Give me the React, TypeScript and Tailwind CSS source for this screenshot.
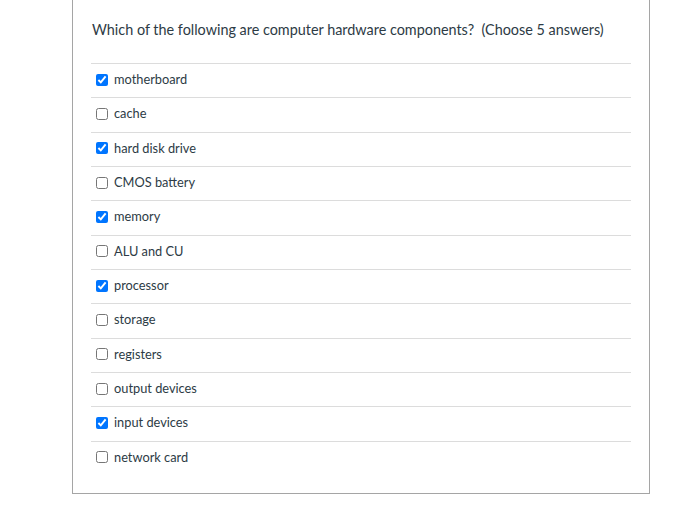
const options: { label: string; checked: boolean }[] = [
  { label: "motherboard", checked: true },
  { label: "cache", checked: false },
  { label: "hard disk drive", checked: true },
  { label: "CMOS battery", checked: false },
  { label: "memory", checked: true },
  { label: "ALU and CU", checked: false },
  { label: "processor", checked: true },
  { label: "storage", checked: false },
  { label: "registers", checked: false },
  { label: "output devices", checked: false },
  { label: "input devices", checked: true },
  { label: "network card", checked: false },
]

export default function App() {
  return (
    <div className="h-[513px] w-[682px] bg-white pl-[72px] font-['Lato','Liberation_Sans',sans-serif] text-[#2d3b45]">
      {/* card, top edge sits above the viewport */}
      <div className="w-[578px] border-x border-b border-[#a5a5a5] px-[18px] pb-[18px]">
        <div className="flex h-[63px] items-start pt-[19px] pl-px text-[14.4px]">
          Which of the following are computer hardware components?&nbsp; (Choose 5 answers)
        </div>

        <ul>
          {options.map((o) => (
            <li
              key={o.label}
              className="flex h-[34.33px] items-center border-t border-[#dcdcdc] pb-[2px] pl-[5px] text-[12.8px]"
            >
              <input
                type="checkbox"
                defaultChecked={o.checked}
                className="m-0 h-[12px] w-[12px]"
              />
              <span className="ml-[6px]">{o.label}</span>
            </li>
          ))}
        </ul>
      </div>
    </div>
  )
}
